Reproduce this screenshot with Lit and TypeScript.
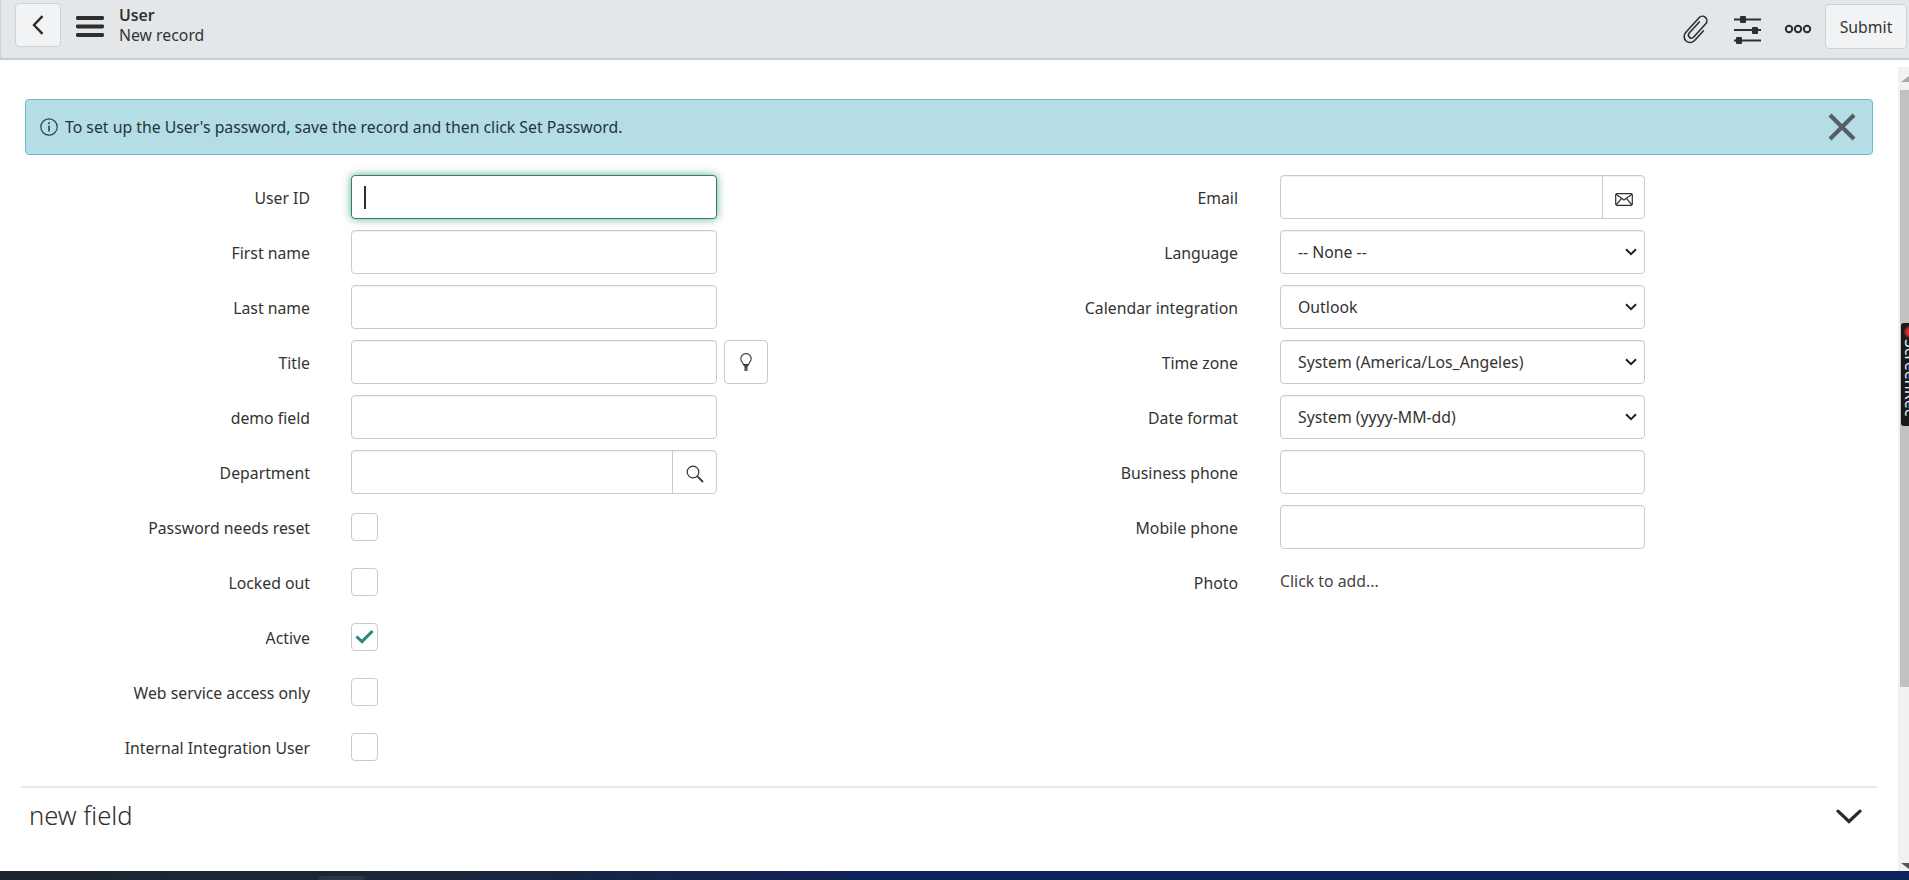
import { LitElement, html, css } from "lit";
import { customElement } from "lit/decorators.js";

const leftRows = [
  { label: "User ID", kind: "focus" },
  { label: "First name", kind: "text" },
  { label: "Last name", kind: "text" },
  { label: "Title", kind: "bulb" },
  { label: "demo field", kind: "text" },
  { label: "Department", kind: "search" },
  { label: "Password needs reset", kind: "check" },
  { label: "Locked out", kind: "check" },
  { label: "Active", kind: "checked" },
  { label: "Web service access only", kind: "check" },
  { label: "Internal Integration User", kind: "check" },
];
const rightRows = [
  { label: "Email", kind: "email" },
  { label: "Language", kind: "select", value: "-- None --" },
  { label: "Calendar integration", kind: "select", value: "Outlook" },
  { label: "Time zone", kind: "select", value: "System (America/Los_Angeles)" },
  { label: "Date format", kind: "select", value: "System (yyyy-MM-dd)" },
  { label: "Business phone", kind: "text" },
  { label: "Mobile phone", kind: "text" },
  { label: "Photo", kind: "photo" },
];

@customElement("app-root")
export class AppRoot extends LitElement {
  static styles = css`
    :host {
      display: flex;
      flex-direction: column;
      width: 1909px;
      height: 880px;
      overflow: hidden;
      background: #fff;
      color: #2e2e2e;
      font-family: "Noto Sans", "Lato", sans-serif;
      font-size: 15.8px;
    }
    * { box-sizing: border-box; }
    .header {
      flex: 0 0 60px;
      display: flex;
      align-items: flex-start;
      background: #e4e7ea;
      border-bottom: 2px solid #c9cacb;
      border-left: 1px solid #d0d2d4;
      padding: 3px 2px 0 14px;
    }
    .btn {
      background: #f1f3f5;
      border: 1px solid #cfd2d5;
      border-radius: 4px;
      display: flex;
      align-items: center;
      justify-content: center;
    }
    .back { width: 46px; height: 44px; }
    .burger { margin: 13px 0 0 15px; width: 28px; height: 21px; display: block; }
    .titles { margin: 2px 0 0 15px; line-height: 20px; }
    .titles .t1 { font-weight: 600; color: #333; }
    .titles .t2 { color: #333; }
    .spacer { flex: 1; }
    .hicon { display: block; }
    .clip { margin: 12px 23px 0 0; }
    .sliders { margin: 13px 22px 0 0; }
    .dots { margin: 21px 13px 0 0; }
    .submit {
      width: 82px;
      height: 45px;
      margin-top: 1px;
      color: #333;
    }
    .middle { flex: 1; display: flex; min-height: 0; }
    .content { flex: 1; min-width: 0; padding: 39px 0 0 0; }
    .alert {
      margin: 0 25px;
      height: 56px;
      background: #b5dde5;
      border: 1px solid #6cbccf;
      border-radius: 4px;
      display: flex;
      align-items: center;
      padding: 0 16px 0 14px;
      color: #22343f;
    }
    .alert .msg { margin-left: 7px; flex: 1; }
    .form {
      display: grid;
      grid-template-columns: 955px 1fr;
      margin-top: 20px;
    }
    .col { display: flex; flex-direction: column; gap: 11px; }
    .row { display: flex; align-items: center; height: 44px; }
    .label { text-align: right; color: #333; padding-top: 1px; white-space: nowrap; }
    .left .label { width: 310px; margin-right: 41px; }
    .right .label { width: 283px; margin-right: 42px; }
    .field {
      height: 44px;
      width: 366px;
      background: #fff;
      border: 1px solid #cbcbcb;
      border-radius: 4px;
      box-shadow: inset 0 1px 1px rgba(0, 0, 0, 0.06);
      display: flex;
      align-items: stretch;
    }
    .right .field { width: 365px; }
    .focus {
      border-color: #27816f;
      box-shadow: 0 0 9px rgba(39, 129, 111, 0.7);
      align-items: center;
      padding-left: 12px;
    }
    .caret { width: 2px; height: 23px; background: #2e2e2e; }
    .input-fill { flex: 1; }
    .addon {
      border-left: 1px solid #cbcbcb;
      display: flex;
      align-items: center;
      justify-content: center;
    }
    .addon svg { margin-top: 4px; }
    .addon.search { width: 44px; }
    .addon.mail { width: 42px; }
    .bulb {
      width: 44px;
      height: 44px;
      margin-left: 7px;
      border: 1px solid #cbcbcb;
      border-radius: 4px;
      display: flex;
      align-items: center;
      justify-content: center;
    }
    .check {
      width: 27px;
      height: 28px;
      margin-top: -1px;
      border: 1px solid #cbcbcb;
      border-radius: 4px;
      display: flex;
      align-items: center;
      justify-content: center;
    }
    .select {
      align-items: center;
      padding: 0 7px 0 17px;
      color: #333;
    }
    .select span { flex: 1; white-space: nowrap; }
    .photo { color: #444; margin-top: -2px; }
    .divider {
      height: 2px;
      background: #e8e8e8;
      margin: 17px 21px 0 21px;
    }
    .section {
      display: flex;
      align-items: center;
      justify-content: space-between;
      padding: 10px 36px 0 29px;
    }
    .section .name { font-size: 25.6px; font-weight: 300; color: #2e2e2e; line-height: 36px; }
    .scrollbar {
      flex: 0 0 11px;
      margin-top: 7px;
      background: #f1f1f1;
      display: flex;
      flex-direction: column;
      align-items: flex-end;
      position: relative;
    }
    .arrow { height: 23px; width: 100%; display: flex; justify-content: flex-end; padding-top: 9px; }
    .thumb { width: 9px; height: 597px; background: #c1c1c1; }
    .sb-rest { flex: 1; }
    .sb-down { margin-bottom: 2px; }
    .rec {
      position: absolute;
      right: 0;
      top: 256px;
      width: 8px;
      height: 103px;
      background: #16181a;
      border-radius: 3px 0 0 3px;
      overflow: hidden;
    }
    .rec .dot {
      position: absolute;
      left: 3px;
      top: 3px;
      width: 12px;
      height: 12px;
      border-radius: 50%;
      background: #f01c20;
      border: 2px solid #6e2a2c;
    }
    .rec .txt {
      position: absolute;
      left: 2px;
      top: 16px;
      writing-mode: vertical-rl;
      color: #eee;
      font-size: 16px;
      line-height: 16px;
      white-space: nowrap;
    }
    .footer {
      flex: 0 0 9px;
      background: linear-gradient(90deg, #1c2430 0%, #1b2636 20%, #0f2258 45%, #0f2258 100%);
      position: relative;
    }
    .footer .tab {
      position: absolute;
      left: 318px;
      top: 5px;
      width: 47px;
      height: 4px;
      border-radius: 3px 3px 0 0;
      background: #2c3544;
    }
  `;

  private field(r: any) {
    switch (r.kind) {
      case "focus":
        return html`<div class="field focus"><div class="caret"></div></div>`;
      case "bulb":
        return html`<div class="field"></div>
          <div class="bulb">
            <svg width="12" height="19" viewBox="0 0 12 19" fill="none" stroke="#333" stroke-width="1.1">
              <path d="M3.5 11.6C3.1 9.6 .8 8.4 .8 5.8a5.2 5.2 0 0 1 10.4 0c0 2.6-2.3 3.8-2.7 5.8z" />
              <path d="M3.8 12 6 14.2 8.2 12M6 12v6M4 15h4M4 17h4" />
            </svg>
          </div>`;
      case "search":
        return html`<div class="field">
          <div class="input-fill"></div>
          <div class="addon search">
            <svg width="18" height="18" viewBox="0 0 18 18" fill="none" stroke="#333" stroke-width="1.2">
              <circle cx="7" cy="7" r="5.8" />
              <path d="M11.2 11.2 17 17" stroke-width="1.8" />
            </svg>
          </div>
        </div>`;
      case "email":
        return html`<div class="field">
          <div class="input-fill"></div>
          <div class="addon mail">
            <svg width="18" height="13" viewBox="0 0 18 13" fill="none" stroke="#2e2e2e" stroke-width="1.2">
              <rect x="0.7" y="0.7" width="16.6" height="11.6" rx="1.2" />
              <path d="M1 1.2 9 7l8-5.8M1 12 6.6 5.4M17 12 11.4 5.4" />
            </svg>
          </div>
        </div>`;
      case "check":
        return html`<div class="check"></div>`;
      case "checked":
        return html`<div class="check">
          <svg width="19" height="15" viewBox="0 0 19 15" fill="none" stroke="#27877c" stroke-width="3">
            <path d="M1.5 7.5 7 12.6 17.5 2" />
          </svg>
        </div>`;
      case "select":
        return html`<div class="field select">
          <span>${r.value}</span>
          <svg width="12" height="8" viewBox="0 0 12 8" fill="none" stroke="#222" stroke-width="2">
            <path d="M1 1.2 6 6.2l5-5" />
          </svg>
        </div>`;
      case "photo":
        return html`<div class="photo">Click to add...</div>`;
      default:
        return html`<div class="field"></div>`;
    }
  }

  private rows(list: any[]) {
    return list.map(
      (r) => html`<div class="row">
        <div class="label">${r.label}</div>
        ${this.field(r)}
      </div>`
    );
  }

  render() {
    return html`
      <div class="header">
        <div class="btn back">
          <svg width="12" height="20" viewBox="0 0 12 20" fill="none" stroke="#2b2b2b" stroke-width="2.4">
            <path d="M10.5 1.2 2 10l8.5 8.8" />
          </svg>
        </div>
        <svg class="burger" viewBox="0 0 28 21" fill="#2e2e2e">
          <rect x="0" y="0" width="28" height="4" rx="1.4" />
          <rect x="0" y="8.5" width="28" height="4" rx="1.4" />
          <rect x="0" y="17" width="28" height="4" rx="1.4" />
        </svg>
        <div class="titles">
          <div class="t1">User</div>
          <div class="t2">New record</div>
        </div>
        <div class="spacer"></div>
        <svg class="hicon clip" width="29" height="29" viewBox="0 0 29 29" fill="none" stroke="#2e2e2e" stroke-width="1.6" stroke-linecap="round">
          <g transform="rotate(42 14.5 14.5) translate(0 -1)">
            <path d="M11.5 8V23a3 3 0 0 0 6 0V5a4.5 4.5 0 0 0-9 0V25a6 6 0 0 0 12 0V12" />
          </g>
        </svg>
        <svg class="hicon sliders" width="28" height="28" viewBox="0 0 28 28" fill="#2e2e2e">
          <rect x="0" y="2.5" width="27" height="2" />
          <rect x="6" y="0" width="6" height="7" rx="1" />
          <rect x="0" y="13" width="27" height="2" />
          <rect x="18" y="11" width="6" height="7" rx="1" />
          <rect x="0" y="23.5" width="27" height="2" />
          <rect x="2" y="21" width="6" height="7" rx="1" />
        </svg>
        <svg class="hicon dots" width="28" height="10" viewBox="0 0 28 10" fill="none" stroke="#2e2e2e" stroke-width="2">
          <circle cx="5" cy="5" r="3.2" />
          <circle cx="14" cy="5" r="3.2" />
          <circle cx="23" cy="5" r="3.2" />
        </svg>
        <div class="btn submit">Submit</div>
      </div>
      <div class="middle">
        <div class="content">
          <div class="alert">
            <svg width="18" height="18" viewBox="0 0 18 18" fill="none" stroke="#2b4250" stroke-width="1.2">
              <circle cx="9" cy="9" r="8.2" />
              <path d="M9 7.6v6" stroke-width="1.6" />
              <path d="M9 4.2v1.8" stroke-width="1.8" />
            </svg>
            <div class="msg">To set up the User's password, save the record and then click Set Password.</div>
            <svg width="28" height="28" viewBox="0 0 28 28" fill="none" stroke="#555f63" stroke-width="4.2">
              <path d="M2 2 26 26M26 2 2 26" />
            </svg>
          </div>
          <div class="form">
            <div class="col left">${this.rows(leftRows)}</div>
            <div class="col right">${this.rows(rightRows)}</div>
          </div>
          <div class="divider"></div>
          <div class="section">
            <div class="name">new field</div>
            <svg width="26" height="15" viewBox="0 0 26 15" fill="none" stroke="#2a2a2a" stroke-width="3.2" stroke-linecap="round">
              <path d="M2 2.2 13 12.5 24 2.2" />
            </svg>
          </div>
        </div>
        <div class="scrollbar">
          <div class="arrow">
            <svg width="8" height="7" viewBox="0 0 8 7" fill="#a8a8a8"><path d="M8 0v6H0z" /></svg>
          </div>
          <div class="thumb"></div>
          <div class="sb-rest"></div>
          <svg class="sb-down" width="8" height="7" viewBox="0 0 8 7" fill="#555"><path d="M0 1h8v6z" /></svg>
          <div class="rec"><div class="dot"></div><div class="txt">ScreenRec</div></div>
        </div>
      </div>
      <div class="footer"><div class="tab"></div></div>
    `;
  }
}
